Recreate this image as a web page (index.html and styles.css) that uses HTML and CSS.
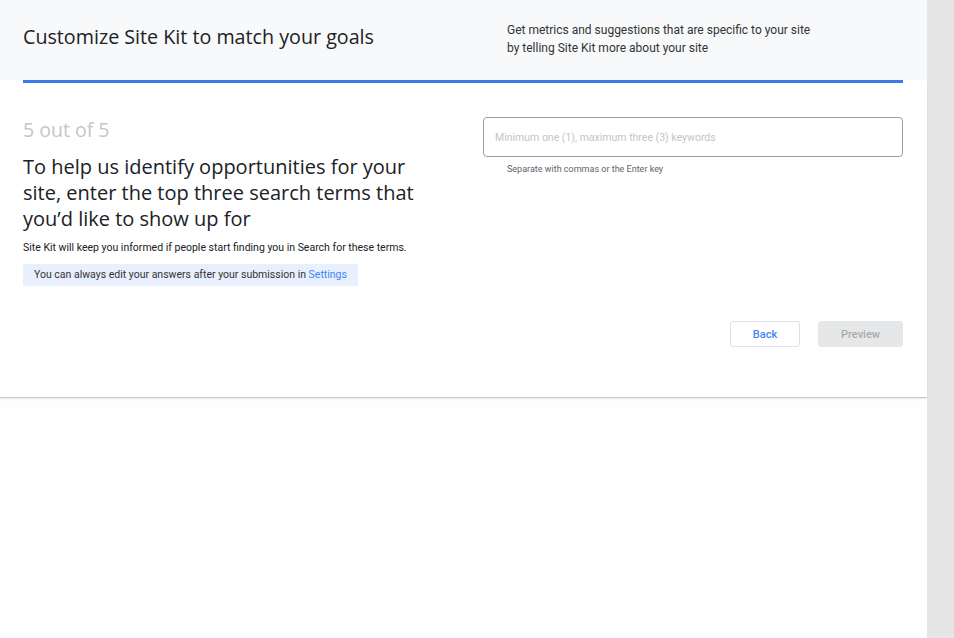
FILE: index.html
```html
<!DOCTYPE html>
<html lang="en">
<head>
<meta charset="utf-8">
<title>Customize Site Kit</title>
<link rel="stylesheet" href="styles.css">
</head>
<body>
<div class="app">
  <header class="hero">
    <h1 class="hero-title">Customize Site Kit to match your goals</h1>
    <p class="hero-desc">Get metrics and suggestions that are specific to your site<br>by telling Site Kit more about your site</p>
  </header>
  <div class="progress"></div>
  <section class="card">
    <div class="question">
      <div class="left">
        <div class="step">5 out of 5</div>
        <h2 class="q-title">To help us identify opportunities for your site, enter the top three search terms that you’d like to show up for</h2>
        <p class="q-desc">Site Kit will keep you informed if people start finding you in Search for these terms.</p>
        <div class="notice">You can always edit your answers after your submission in <a class="link" href="#">Settings</a></div>
      </div>
      <div class="right">
        <div class="field">
          <input class="field-input" type="text" placeholder="Minimum one (1), maximum three (3) keywords">
        </div>
        <div class="helper">Separate with commas or the Enter key</div>
      </div>
    </div>
    <div class="actions">
      <button class="btn btn-back" type="button">Back</button>
      <button class="btn btn-preview" type="button" disabled>Preview</button>
    </div>
  </section>
</div>
</body>
</html>
```

FILE: styles.css
```css
* { box-sizing: border-box; }
html, body { margin: 0; padding: 0; }
body {
  background: #e5e5e5;
  font-family: Roboto, "Liberation Sans", Arial, sans-serif;
  color: #202124;
}
.app {
  width: 927px;
  min-height: 638px;
  background: #fefefe;
}
.hero {
  height: 80px;
  background: #f8f9fa;
  display: grid;
  grid-template-columns: 484px 1fr;
  padding: 0 23px;
}
.hero-title {
  margin: 0;
  padding-top: 24px;
  font-family: "Open Sans", Roboto, sans-serif;
  font-weight: 400;
  font-size: 19.7px;
  line-height: 26px;
  color: #202124;
}
.hero-desc {
  margin: 0;
  padding-top: 21px;
  font-size: 12px;
  line-height: 18px;
  color: #333;
}
.progress {
  height: 3px;
  margin: 0 24px 0 23px;
  background: #3b7ae1;
}
.card {
  background: #fff;
  padding: 34px 24px 50px 23px;
  border-bottom: 1px solid #c6c6c6;
  box-shadow: 0 1px 2px rgba(0,0,0,0.08);
}
.question {
  display: grid;
  grid-template-columns: 437px 1fr;
  column-gap: 23px;
}
.step {
  font-family: "Open Sans", Roboto, sans-serif;
  font-size: 19.5px;
  line-height: 24px;
  color: #c4c6c9;
  margin-top: 1px;
}
.q-title {
  max-width: 405px;
  margin: 12px 0 0;
  font-family: "Open Sans", Roboto, sans-serif;
  font-weight: 400;
  font-size: 20px;
  line-height: 26px;
  color: #202124;
}
.q-desc {
  margin: 9px 0 0;
  font-size: 10.5px;
  line-height: 14px;
  color: #202124;
}
.notice {
  display: inline-block;
  margin-top: 9px;
  background: #e8f0fd;
  padding: 4px 11px;
  font-size: 10.5px;
  line-height: 14px;
  color: #333;
}
.link { color: #4285f4; text-decoration: none; }
.field {
  height: 40px;
  border: 1px solid #9a9ea3;
  border-radius: 4px;
  display: flex;
  align-items: center;
  padding: 0 11px;
}
.field-input {
  border: 0;
  outline: 0;
  width: 100%;
  background: transparent;
  font-family: Roboto, sans-serif;
  font-size: 10.5px;
  color: #333;
  padding: 0;
}
.field-input::placeholder { color: #c2c5c9; }
.helper {
  margin-top: 7px;
  padding-left: 24px;
  font-size: 9px;
  line-height: 11px;
  color: #5f6368;
}
.actions {
  display: flex;
  justify-content: flex-end;
  gap: 18px;
  margin-top: 35px;
}
.btn {
  height: 26px;
  border-radius: 3px;
  font-family: Roboto, sans-serif;
  font-size: 11px;
  font-weight: 500;
}
.btn-back {
  width: 70px;
  background: #fff;
  border: 1px solid #dfe1e3;
  color: #4285f4;
}
.btn-preview {
  width: 85px;
  background: #e6e7e8;
  border: 1px solid #e6e7e8;
  color: #a9aaab;
}
```
